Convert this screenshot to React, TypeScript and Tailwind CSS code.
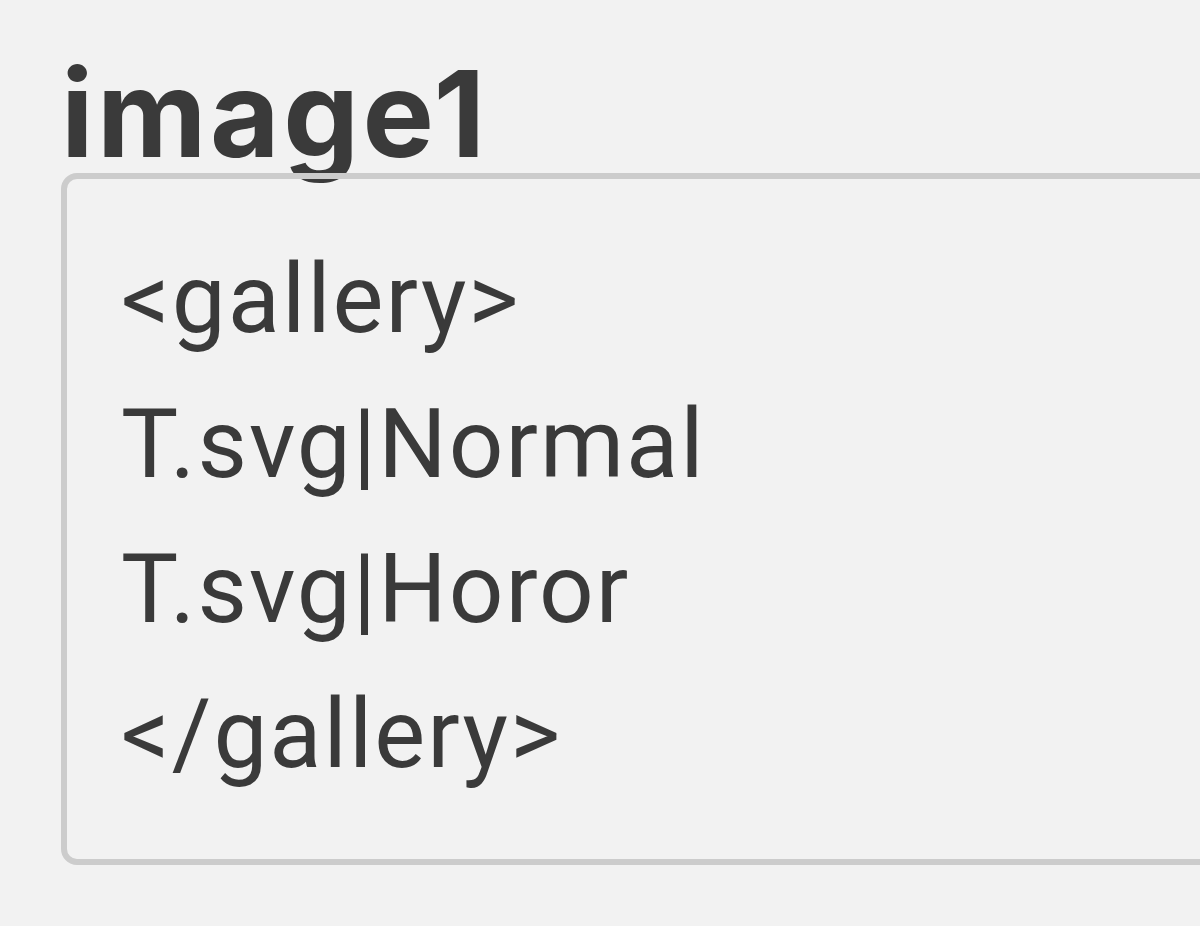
export default function App() {
  const lines = ["<gallery>", "T.svg|Normal", "T.svg|Horor", "</gallery>"];

  return (
    <div className="min-h-screen overflow-hidden bg-[#f2f2f2] pl-[61px] pt-[54px] text-[#3a3a3a]">
      <h1 className="font-['Inter',sans-serif] text-[120px] font-bold leading-none tracking-[3.5px]">image1</h1>
      <div className="relative -mr-10 -mt-px rounded-[16px] border-[6px] border-[#cccccc] pb-[52px] pl-[54px] pt-12">
        {lines.map((line) => (
          <p key={line} className="font-['Roboto',sans-serif] text-[96px] leading-[145px] tracking-[2px]">
            {line}
          </p>
        ))}
      </div>
    </div>
  );
}
